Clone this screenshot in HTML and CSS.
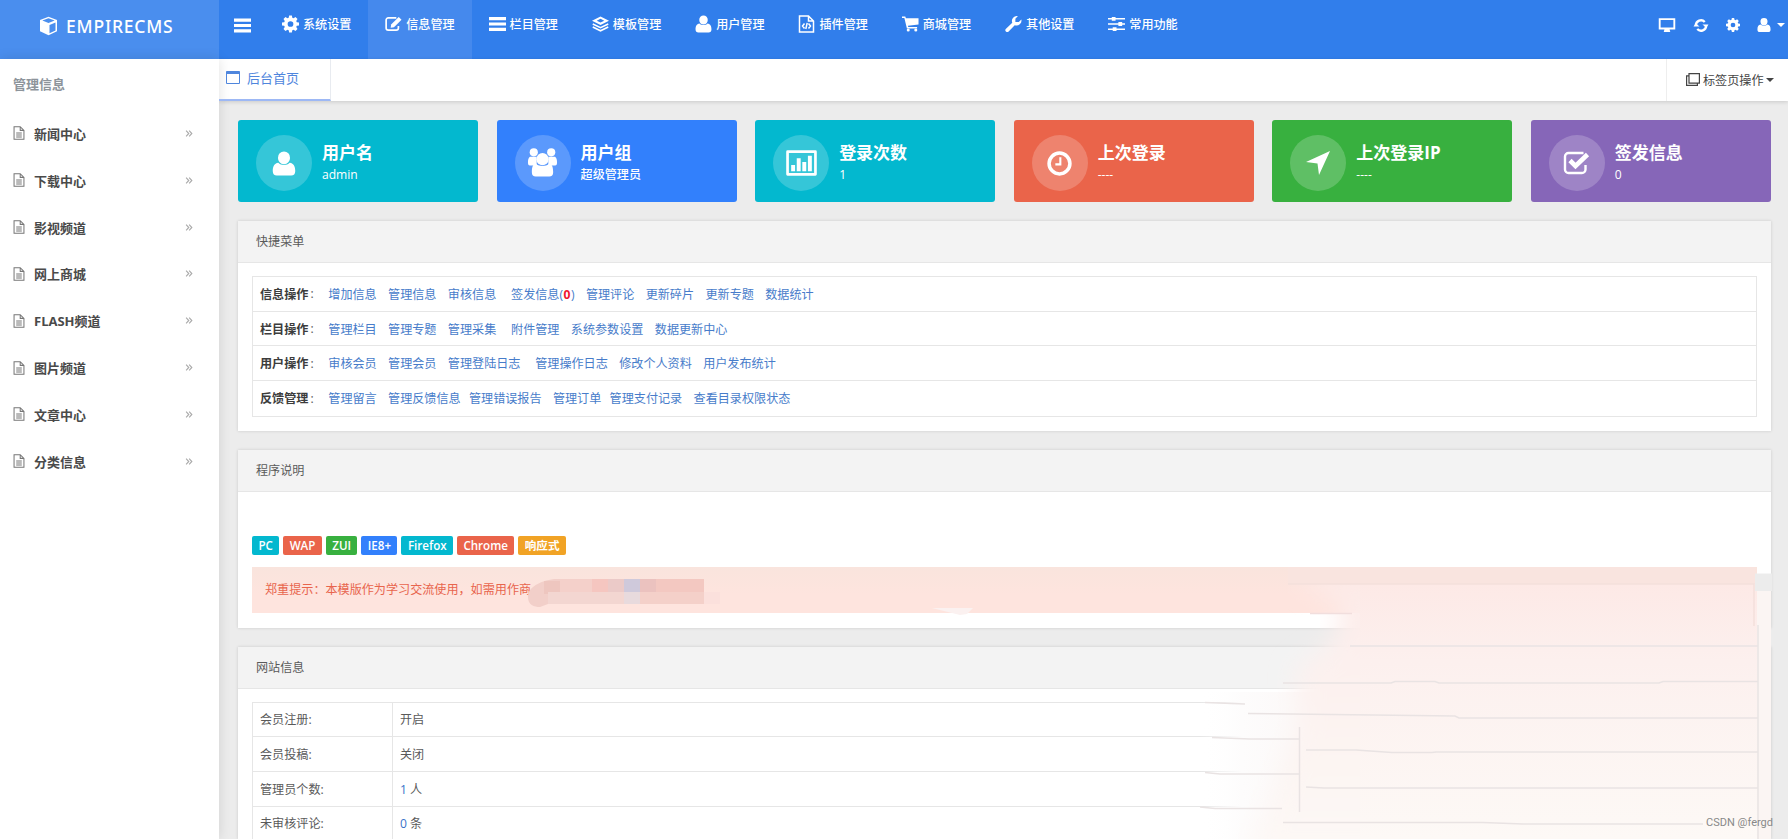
FILE: index.html
```
<!DOCTYPE html>
<html lang="zh-CN">
<head>
    <meta charset="UTF-8">
    <meta name="viewport" content="width=device-width, initial-scale=1.0">
    <title>EmpireCMS</title>
    <link rel="stylesheet" href="styles.css">
</head>
<body>
    <!-- Icon set -->
    <svg class="sprite">
        <symbol id="i-cube" viewBox="0 0 20 20"><path d="M10 .8 18.5 4v11.2L10 19.2 1.500 15.200V4z" fill="currentColor"/><path d="M3.800 4.400 10 2.300l6.200 2.100L10 6.900zM11 9l6-2.500v7.900l-6 2.900z" fill="#4a8eee"/></symbol>
        <symbol id="i-bars" viewBox="0 0 16 16"><path d="M0 1.500h16v3H0zM0 6.500h16v3H0zM0 11.500h16v3H0z" fill="currentColor"/></symbol>
        <symbol id="i-cog" viewBox="0 0 16 16"><path fill="currentColor" fill-rule="evenodd" d="M6.700 0h2.600l.4 2.100 1.200.5L12.700 1.400l1.900 1.900-1.200 1.800.5 1.200 2.100.4v2.600l-2.100.4-.5 1.200 1.200 1.800-1.900 1.900-1.800-1.200-1.200.5-.4 2.100H6.700l-.4-2.100-1.200-.5-1.800 1.200-1.900-1.900 1.200-1.800-.5-1.200L0 9.300V6.700l2.100-.4.5-1.200-1.200-1.800 1.900-1.900 1.800 1.200 1.200-.5zM8 5.300a2.700 2.700 0 1 0 0 5.400 2.700 2.700 0 0 0 0-5.400z"/></symbol>
        <symbol id="i-edit" viewBox="0 0 18 16"><path d="M12 1.500H3.500A2.300 2.300 0 0 0 1.200 3.800v8.400a2.300 2.300 0 0 0 2.300 2.300h8.400a2.300 2.300 0 0 0 2.300-2.300V10" fill="none" stroke="currentColor" stroke-width="1.800"/><path d="M14.500.5 17.500 3.500 9.500 11.500 6 12l.5-3.500z" fill="currentColor"/></symbol>
        <symbol id="i-layers" viewBox="0 0 18 16"><path d="M9 0 18 4.500 9 9 0 4.500z" fill="currentColor"/><path d="m.8 8 8.200 4 8.200-4M.8 11.200l8.200 4 8.200-4" fill="none" stroke="currentColor" stroke-width="1.600"/><path d="m5 4.500 4-2 4 2-4 2z" fill="#317eeb"/></symbol>
        <symbol id="i-user" viewBox="0 0 16 16"><path fill="currentColor" d="M8 0a4 4 0 0 1 4 4.200C12 6.600 10.400 8.500 8 8.500S4 6.600 4 4.200A4 4 0 0 1 8 0zM4.200 7.500C5.200 8.500 6.500 9 8 9s2.800-.5 3.800-1.500c2.800.3 3.700 2.700 3.700 5.500 0 2-1 3-2.700 3H3.200C1.500 16 .5 15 .5 13c0-2.800.9-5.200 3.700-5.500z"/></symbol>
        <symbol id="i-group" viewBox="0 0 30 32"><g fill="currentColor"><circle cx="6" cy="4.500" r="4.200"/><circle cx="24" cy="4.500" r="4.200"/><path d="M2 9h7v9H2c-1.500 0-2-1-2-3 0-3 .5-5 2-6zM28 9h-7v9h7c1.500 0 2-1 2-3 0-3-.5-5-2-6z"/><circle cx="15" cy="11.500" r="6.300"/><path d="M8 16c2 1.800 4.500 2.600 7 2.600s5-.8 7-2.600c3 .8 4 4 4 9 0 3-1.500 4.500-4 4.500H8c-2.500 0-4-1.500-4-4.500 0-5 1-8.200 4-9z"/></g></symbol>
        <symbol id="i-code" viewBox="0 0 16 18"><path d="M1 1h9l5 5v11H1zM10 1v5h5M6 8.500l-2 2.500 2 2.500M10 8.500l2 2.500-2 2.500M8.700 7.800l-1.400 6.200" fill="none" stroke="currentColor" stroke-width="1.500"/></symbol>
        <symbol id="i-cart" viewBox="0 0 18 16"><path fill="currentColor" d="M0 0h3.500l.6 2H17.500v6.500L6.300 9.900l.3 1.400H16v1.500H5.200L2.500 1.600H0z"/><circle cx="6.600" cy="14.400" r="1.600" fill="currentColor"/><circle cx="14.600" cy="14.400" r="1.600" fill="currentColor"/></symbol>
        <symbol id="i-wrench" viewBox="0 0 18 18"><path d="M17.300 4.200a5.200 5.200 0 0 1-7 6l-6.700 6.900a2 2 0 0 1-2.800-2.800l6.900-6.700a5.200 5.200 0 0 1 6-7L11 3.400V6.900h3.600z" fill="currentColor"/></symbol>
        <symbol id="i-sliders" viewBox="0 0 18 16"><path d="M0 2.500h18M0 8h18M0 13.500h18" stroke="currentColor" stroke-width="1.700"/><path d="M4 .5h4v4H4zM11 6h4v4h-4zM5 11.500h4v4H5z" fill="currentColor"/></symbol>
        <symbol id="i-monitor" viewBox="0 0 18 16"><path d="M1.200 1.200h15.600v10H1.200z" fill="none" stroke="currentColor" stroke-width="2"/><path d="M6.500 11h5l1 4h-7z" fill="currentColor"/></symbol>
        <symbol id="i-refresh" viewBox="0 0 16 16"><path d="M2.500 8A5.500 5.500 0 0 1 12 4.200M13.500 8A5.500 5.500 0 0 1 4 11.800" fill="none" stroke="currentColor" stroke-width="2.500"/><path d="M9.500 7h6.500l-2.300 3.500zM6.500 9H0l2.300-3.500z" fill="currentColor"/></symbol>
        <symbol id="i-doc" viewBox="0 0 12 15"><path d="M.7.700h6.600l4 4v9.600H.700zM7.300.700v4h4M3 7.500h6M3 9.700h6M3 11.900h6" fill="none" stroke="currentColor" stroke-width="1.100"/></symbol>
        <symbol id="i-more" viewBox="0 0 8 8"><path d="m.7.700 3 3.300-3 3.300M4.200.700l3 3.300-3 3.300" fill="none" stroke="currentColor" stroke-width="1.300"/></symbol>
        <symbol id="i-window" viewBox="0 0 14 13"><path d="M.5.500h13v12H.500z" fill="none" stroke="currentColor"/><path d="M.5.500h13v2.500H.500z" fill="currentColor"/></symbol>
        <symbol id="i-tabs" viewBox="0 0 14 13"><path d="M3 .6h10.400v9.500H3zM3 2.800H.6v9.600h10.800v-2.200" fill="none" stroke="currentColor" stroke-width="1.200"/></symbol>
        <symbol id="i-chart" viewBox="0 0 30 25"><path d="M1.500 1.500h27v22h-27z" fill="none" stroke="currentColor" stroke-width="2.600" stroke-linejoin="round"/><path d="M5 14.500h3.800v6H5zM10.400 8h3.800v12.500h-3.800zM15.800 11.500h3.800v9h-3.800zM21.200 5.500H25v15h-3.800z" fill="currentColor"/></symbol>
        <symbol id="i-clock" viewBox="0 0 24 24"><circle cx="12" cy="12" r="10" fill="none" stroke="currentColor" stroke-width="3.400"/><path d="M12.800 6v6.800H8" fill="none" stroke="currentColor" stroke-width="2"/></symbol>
        <symbol id="i-arrow" viewBox="0 0 24 24"><path d="M24 0 13 24l-1.500-11.500L0 11z" fill="currentColor"/></symbol>
        <symbol id="i-check" viewBox="0 0 26 24"><path d="M20 2H5a3.500 3.500 0 0 0-3.500 3.500v13A3.500 3.500 0 0 0 5 22h13.500a3.500 3.500 0 0 0 3.500-3.500V14" fill="none" stroke="currentColor" stroke-width="2.400"/><path d="m6.500 9.500 5.500 5.500L24 3.500" fill="none" stroke="currentColor" stroke-width="4.600"/></symbol>
    </svg>

    <header class="header">
        <div class="logo"><svg class="logo-icon"><use href="#i-cube"/></svg>EMPIRECMS</div>
        <a class="toggle"><svg class="icon-toggle"><use href="#i-bars"/></svg></a>
        <nav class="nav">
            <a><svg><use href="#i-cog"/></svg>系统设置</a>
            <a class="active"><svg><use href="#i-edit"/></svg>信息管理</a>
            <a><svg><use href="#i-bars"/></svg>栏目管理</a>
            <a><svg><use href="#i-layers"/></svg>模板管理</a>
            <a><svg><use href="#i-user"/></svg>用户管理</a>
            <a><svg><use href="#i-code"/></svg>插件管理</a>
            <a><svg><use href="#i-cart"/></svg>商城管理</a>
            <a><svg><use href="#i-wrench"/></svg>其他设置</a>
            <a><svg><use href="#i-sliders"/></svg>常用功能</a>
        </nav>
        <div class="tools">
            <svg class="tool-wide"><use href="#i-monitor"/></svg>
            <svg><use href="#i-refresh"/></svg>
            <svg class="tool-small"><use href="#i-cog"/></svg>
            <svg class="tool-small"><use href="#i-user"/></svg>
            <i class="caret"></i>
        </div>
    </header>

    <div class="layout">
        <aside class="sidebar">
            <h2>管理信息</h2>
            <ul>
                <li><svg class="doc"><use href="#i-doc"/></svg>新闻中心<svg class="more"><use href="#i-more"/></svg></li>
                <li><svg class="doc"><use href="#i-doc"/></svg>下载中心<svg class="more"><use href="#i-more"/></svg></li>
                <li><svg class="doc"><use href="#i-doc"/></svg>影视频道<svg class="more"><use href="#i-more"/></svg></li>
                <li><svg class="doc"><use href="#i-doc"/></svg>网上商城<svg class="more"><use href="#i-more"/></svg></li>
                <li><svg class="doc"><use href="#i-doc"/></svg>FLASH频道<svg class="more"><use href="#i-more"/></svg></li>
                <li><svg class="doc"><use href="#i-doc"/></svg>图片频道<svg class="more"><use href="#i-more"/></svg></li>
                <li><svg class="doc"><use href="#i-doc"/></svg>文章中心<svg class="more"><use href="#i-more"/></svg></li>
                <li><svg class="doc"><use href="#i-doc"/></svg>分类信息<svg class="more"><use href="#i-more"/></svg></li>
            </ul>
        </aside>

        <main class="main">
            <div class="tabs">
                <a class="tab"><svg><use href="#i-window"/></svg>后台首页</a>
                <a class="tab-menu"><svg><use href="#i-tabs"/></svg>标签页操作<i class="caret"></i></a>
            </div>

            <div class="content">
                <section class="cards">
                    <div class="card teal">
                        <div class="circle"><svg width="24" height="25"><use href="#i-user"/></svg></div>
                        <div><h3>用户名</h3><p>admin</p></div>
                    </div>
                    <div class="card blue">
                        <div class="circle"><svg width="31" height="31"><use href="#i-group"/></svg></div>
                        <div><h3>用户组</h3><p>超级管理员</p></div>
                    </div>
                    <div class="card teal">
                        <div class="circle"><svg width="31" height="26"><use href="#i-chart"/></svg></div>
                        <div><h3>登录次数</h3><p>1</p></div>
                    </div>
                    <div class="card red">
                        <div class="circle"><svg width="25" height="25"><use href="#i-clock"/></svg></div>
                        <div><h3>上次登录</h3><p>----</p></div>
                    </div>
                    <div class="card green">
                        <div class="circle"><svg width="24" height="24"><use href="#i-arrow"/></svg></div>
                        <div><h3>上次登录IP</h3><p>----</p></div>
                    </div>
                    <div class="card purple">
                        <div class="circle"><svg width="27" height="24"><use href="#i-check"/></svg></div>
                        <div><h3>签发信息</h3><p>0</p></div>
                    </div>
                </section>

                <section class="panel">
                    <div class="panel-head">快捷菜单</div>
                    <div class="panel-body">
                        <div class="menu-table">
                            <div class="menu-row"><b>信息操作</b><span class="colon">:</span><a>增加信息</a><a>管理信息</a><a>审核信息</a><a class="wide">签发信息(<em>0</em>)</a><a>管理评论</a><a>更新碎片</a><a>更新专题</a><a>数据统计</a></div>
                            <div class="menu-row"><b>栏目操作</b><span class="colon">:</span><a>管理栏目</a><a>管理专题</a><a>管理采集</a><a class="wide">附件管理</a><a>系统参数设置</a><a>数据更新中心</a></div>
                            <div class="menu-row"><b>用户操作</b><span class="colon">:</span><a>审核会员</a><a>管理会员</a><a>管理登陆日志</a><a class="wide">管理操作日志</a><a>修改个人资料</a><a>用户发布统计</a></div>
                            <div class="menu-row"><b>反馈管理</b><span class="colon">:</span><a>管理留言</a><a>管理反馈信息</a><a class="narrow">管理错误报告</a><a>管理订单</a><a class="narrow">管理支付记录</a><a>查看目录权限状态</a></div>
                        </div>
                    </div>
                </section>

                <section class="panel panel-about">
                    <div class="panel-head">程序说明</div>
                    <div class="panel-body">
                        <div class="labels">
                            <span class="label teal">PC</span>
                            <span class="label red">WAP</span>
                            <span class="label green">ZUI</span>
                            <span class="label blue">IE8+</span>
                            <span class="label teal">Firefox</span>
                            <span class="label red">Chrome</span>
                            <span class="label yellow">响应式</span>
                        </div>
                        <div class="alert">郑重提示：本模版作为学习交流使用，如需用作商
                            <svg class="mosaic" viewBox="0 0 192 28">
                                <path d="M26 0C12 2 0 8 0 18c0 8 6 10 12 10l8-3h12V0z" fill="#f2cfc9"/>
                                <path d="M16 2h16v13H16z" fill="#eec6bf"/>
                                <path d="M32 0h32v15H32z" fill="#f4d0ca"/>
                                <path d="M64 0h16v15H64z" fill="#f5c6c0"/>
                                <path d="M80 0h16v15H80z" fill="#ebcac8"/>
                                <path d="M96 0h16v15H96z" fill="#cfc9db"/>
                                <path d="M112 0h16v15h-16z" fill="#ebc2bf"/>
                                <path d="M128 0h48v15h-48z" fill="#f3c8c1"/>
                                <path d="M20 13h76v12H20z" fill="#f3d6d1"/>
                                <path d="M96 13h16v12H96z" fill="#e8dadd"/>
                                <path d="M112 13h64v12h-64z" fill="#f4d0c9"/>
                                <path d="M176 13h16v12h-16z" fill="#fbe0dc"/>
                            </svg>
                            <svg class="wedge" viewBox="0 0 41 7"><path d="M0 0h41l-6 6-7 1z" fill="#fbf1f0"/></svg>
                        </div>
                    </div>
                </section>

                <section class="panel panel-site">
                    <div class="panel-head">网站信息</div>
                    <div class="panel-body">
                        <table class="info">
                            <tr><td>会员注册:</td><td>开启</td></tr>
                            <tr><td>会员投稿:</td><td>关闭</td></tr>
                            <tr><td>管理员个数:</td><td><a>1</a> 人</td></tr>
                            <tr><td>未审核评论:</td><td><a>0</a> 条</td></tr>
                        </table>
                    </div>
                </section>
            </div>
        </main>
    </div>

    <!-- Faded patch over the lower right corner -->
    <svg class="patch" viewBox="1180 560 608 279">
        <defs>
            <linearGradient id="fade" x1="0" y1="0" x2="0" y2="1">
                <stop offset="0" stop-color="#fde9e6"/>
                <stop offset=".3" stop-color="#fcf0ee"/>
                <stop offset="1" stop-color="#fdf9f6"/>
            </linearGradient>
            <linearGradient id="side" x1="0" y1="0" x2="1" y2="0">
                <stop offset="0" stop-color="#fff" stop-opacity="0"/>
                <stop offset=".3" stop-color="#fdfcfc"/>
                <stop offset="1" stop-color="#fbf6f5"/>
            </linearGradient>
            <filter id="soft" x="-20%" y="-20%" width="140%" height="140%"><feGaussianBlur stdDeviation="12"/></filter>
            <clipPath id="area"><path d="M1180 628h140v-13h-32v-31h467v7h16v248h-591z"/></clipPath>
        </defs>
        <path d="M1755 573.500h17v17.500h-17z" fill="#ececec"/>
        <path d="M1288 567h467v17h-467z" fill="#f9e4df"/>
        <g clip-path="url(#area)">
            <path d="M1200 692h140v147h-140z" fill="url(#side)"/>
            <path d="M1285 570h520v290h-560l25-60 30-80-5-50 35-25 15-35z" fill="url(#fade)" filter="url(#soft)"/>
            <path d="M1360 584h397v255h-397z" fill="url(#fade)"/>
            <path d="M1757 591h14v248h-14z" fill="#fbf5f3"/>
        </g>
        <g fill="none" stroke="#e9e3e3" stroke-width="1.500">
            <path d="M1288 584h466v42" stroke="#f3dfdc"/>
            <path d="M1310 613.500h42" stroke="#f1dedd"/>
            <path d="M1350 646h408M1283 683h108l4-1.500h40l4 1.500h220l4-1.500h95"/>
            <path d="M1205 702.500l40 1.500M1248 713.500l207 2.500 4 2h299"/>
            <path d="M1212 737.500l38 1.500h49M1306 750h50l36 2.500h40l4-.5h322"/>
            <path d="M1205 772.500l15 1.500h79M1306 787l18 1h434M1200 807l15 1.500h67M1283 822.500h200l40 1.500h180"/>
            <path d="M1299.500 727v85M1758 625v214"/>
        </g>
    </svg>
    <div class="watermark">CSDN @fergd</div>
</body>
</html>
```
FILE: styles.css
```
* {
    box-sizing: border-box;
}
body {
    margin: 0;
    height: 839px;
    overflow: hidden;
    position: relative;
    font-family: 'Open Sans', 'Noto Sans CJK SC', sans-serif;
    font-size: 12.100px;
    color: #5a5a5a;
    background-color: #ececec;
}
h2, h3, p, ul {
    margin: 0;
    padding: 0;
}
svg {
    display: block;
    flex: none;
}
.sprite {
    position: absolute;
    width: 0;
    height: 0;
}
.caret {
    border: 4px solid transparent;
    border-top-color: currentColor;
    border-bottom: 0;
}

/* Header */
.header {
    display: flex;
    height: 58.500px;
    background-color: #317eeb;
    color: #fff;
}
.logo {
    display: flex;
    align-items: center;
    width: 219px;
    padding: 0 0 7px 38px;
    background-color: #4a8eee;
    font-family: 'Noto Sans', 'Open Sans', sans-serif;
    font-size: 17.500px;
    font-weight: 500;
    letter-spacing: 0.8px;
}
.logo-icon {
    width: 21px;
    height: 20px;
    margin-right: 7px;
}
.toggle {
    width: 46px;
    padding: 17px 0 0 15px;
}
.icon-toggle {
    width: 17px;
    height: 17px;
}
.nav {
    display: flex;
}
.nav a {
    display: flex;
    align-items: center;
    justify-content: center;
    gap: 4px;
    width: 103.300px;
    padding-bottom: 10px;
    font-weight: 500;
}
.nav a.active {
    background-color: #4589ed;
}
.nav svg {
    width: 17px;
    height: 18px;
}
.tools {
    display: flex;
    align-items: center;
    gap: 17px;
    margin-left: auto;
    padding: 0 3px 8px 0;
}
.tools svg {
    width: 16px;
    height: 15px;
}
.tools .tool-wide {
    width: 18px;
}
.tools .tool-small {
    width: 14px;
    height: 14px;
}
.tools .caret {
    margin-left: -11px;
}

/* Sidebar */
.layout {
    display: flex;
    height: 780.500px;
}
.sidebar {
    width: 219px;
    background-color: #fff;
    box-shadow: 0 0 12px rgba(0, 0, 0, 0.12);
    z-index: 1;
}
.sidebar h2 {
    padding: 15px 13px 0;
    height: 51.500px;
    font-size: 13px;
    line-height: 20px;
    color: #8d949b;
}
.sidebar ul {
    list-style: none;
}
.sidebar li {
    display: flex;
    align-items: center;
    height: 46.850px;
    padding: 0 26px 0 13px;
    font-size: 13px;
    font-weight: bold;
    color: #4a4a4a;
}
.doc {
    width: 12px;
    height: 14px;
    margin-right: 9px;
    color: #777;
}
.more {
    width: 8px;
    height: 7px;
    margin-left: auto;
    color: #aaa;
}

/* Tabs */
.main {
    flex: 1;
    min-width: 0;
}
.tabs {
    display: flex;
    justify-content: space-between;
    height: 42px;
    background-color: #fff;
    box-shadow: 0 1px 4px rgba(0, 0, 0, 0.15);
}
.tab {
    position: relative;
    z-index: 2;
    display: flex;
    align-items: center;
    gap: 7px;
    width: 112px;
    padding: 0 0 2px 7px;
    border-right: 1px solid #e8ebf0;
    border-bottom: 2px solid #9db8f5;
    font-size: 13px;
    color: #4f86dd;
}
.tab svg {
    width: 14px;
    height: 13px;
}
.tab-menu {
    display: flex;
    align-items: center;
    gap: 3px;
    width: 122px;
    padding-left: 19px;
    border-left: 1px solid #eee;
    color: #444;
}
.tab-menu svg {
    width: 14px;
    height: 13px;
}

/* Cards */
.content {
    padding: 19.500px 17px 0 19px;
}
.cards {
    display: grid;
    grid-template-columns: repeat(6, 1fr);
    gap: 18.400px;
}
.card {
    display: flex;
    height: 82px;
    padding: 15px 0 0 18px;
    border-radius: 3px;
    color: #fff;
}
.card h3 {
    margin-top: 6px;
    font-size: 17px;
    line-height: 24px;
}
.card p {
    font-weight: 500;
    line-height: 20px;
}
.circle {
    display: flex;
    align-items: center;
    justify-content: center;
    width: 56px;
    height: 56px;
    margin-right: 10px;
    border-radius: 50%;
    background-color: rgba(255, 255, 255, 0.2);
}
.teal {
    background-color: #03b8cf;
}
.blue {
    background-color: #3280fc;
}
.red {
    background-color: #ea644a;
}
.green {
    background-color: #38b03f;
}
.purple {
    background-color: #8666b8;
}
.yellow {
    background-color: #f1a325;
}

/* Panels */
.panel {
    height: 210px;
    margin-top: 19px;
    background-color: #fff;
    box-shadow: 0 0 3px rgba(0, 0, 0, 0.15);
}
.panel-head {
    height: 42px;
    padding-left: 18px;
    border-bottom: 1px solid #e6e6e6;
    background-color: #f3f3f3;
    line-height: 41px;
}
.panel-body {
    padding: 13px 14px 0;
}
.panel-about {
    height: 178px;
    margin-top: 18.500px;
}
.panel-site {
    height: 192px;
    margin-top: 19px;
}
.menu-table {
    border: 1px solid #e6e6e6;
}
.menu-row {
    display: flex;
    align-items: center;
    height: 34.700px;
    padding-left: 7px;
    border-bottom: 1px solid #e6e6e6;
}
.menu-row:last-child {
    border-bottom: 0;
}
.menu-row b {
    font-weight: 600;
    color: #3c3c3c;
}
.menu-row .colon {
    width: 8.500px;
    padding-left: 2px;
}
.menu-row a {
    margin-left: 11.400px;
    color: #477cca;
}
.menu-row a.wide {
    margin-left: 14.800px;
}
.menu-row a.narrow {
    margin-left: 8.300px;
}
.menu-row em {
    padding: 0 0.5px;
    font-style: normal;
    font-weight: bold;
    color: #f0142f;
}
.labels {
    display: flex;
    gap: 4px;
    margin-top: 31px;
}
.label {
    height: 19.500px;
    padding: 0 6.400px;
    border-radius: 2px;
    color: #fff;
    font-size: 11.600px;
    font-weight: 600;
    line-height: 19px;
}
.alert {
    position: relative;
    height: 46px;
    margin-top: 12px;
    padding-left: 13px;
    background: linear-gradient(#f9e4dd, #fee4de 60%);
    color: #e8654d;
    line-height: 46px;
}
.mosaic {
    position: absolute;
    left: 276px;
    top: 12px;
    width: 192px;
    height: 28px;
}
.wedge {
    position: absolute;
    left: 680px;
    top: 41px;
    width: 41px;
    height: 7px;
}
.info {
    width: 100%;
    border-collapse: collapse;
}
.info td {
    height: 34.700px;
    padding: 0 7px;
    border: 1px solid #e6e6e6;
}
.info td:first-child {
    width: 140px;
}
.info a {
    color: #3a72c9;
}

/* Overlays */
.patch {
    position: absolute;
    left: 1180px;
    top: 560px;
    width: 608px;
    height: 279px;
}
.watermark {
    position: absolute;
    right: 15px;
    top: 815px;
    font-family: Roboto, sans-serif;
    font-size: 11px;
    line-height: 16px;
    color: #888;
}
```
